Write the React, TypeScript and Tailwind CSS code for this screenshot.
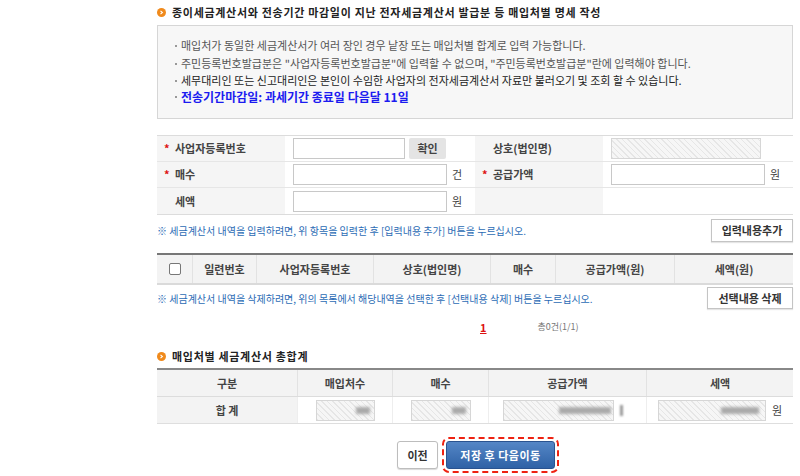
import React from "react";

const font = "font-['Noto_Sans_CJK_KR','Noto_Sans',sans-serif]";
const hatch =
  "bg-[repeating-linear-gradient(45deg,#e6e6e6_0px,#e6e6e6_1px,#f6f6f6_1px,#f6f6f6_4px)]";

function SectionTitle({ children }: { children: React.ReactNode }) {
  return (
    <div className="flex items-center gap-[6px] h-[14px]">
      <span className="flex h-[9px] w-[9px] items-center justify-center rounded-full bg-[#f08a1c]">
        <svg width="5" height="5" viewBox="0 0 5 5">
          <path d="M1.5 0.8 L3.4 2.5 L1.5 4.2" stroke="#fff" strokeWidth="1.1" fill="none" />
        </svg>
      </span>
      <span className="text-[11px] font-bold text-[#222] leading-none tracking-[0.7px]">{children}</span>
    </div>
  );
}

function Bullet({ children, className = "" }: { children: React.ReactNode; className?: string }) {
  return (
    <div className={`flex items-center gap-[4px] ${className}`}>
      <span className="h-[2px] w-[2px] bg-[#999]" />
      {children}
    </div>
  );
}

function Label({ req, children }: { req?: boolean; children: React.ReactNode }) {
  return (
    <div className="flex items-center bg-[#f5f5f5] pl-[7px] text-[11px] font-bold text-[#444]">
      <span className={`w-[11px] text-[#d11] ${req ? "" : "invisible"}`}>*</span>
      {children}
    </div>
  );
}

function Blurred({ w }: { w: number }) {
  return <span className="h-[7px] bg-[#aaa] blur-[1.5px]" style={{ width: w }} />;
}

export default function App() {
  return (
    <div className={`${font} w-[800px] h-[476px] bg-white text-[#333] overflow-hidden`}>
      <div className="ml-[157px] w-[636px] pt-[5px]">
        <SectionTitle>종이세금계산서와 전송기간 마감일이 지난 전자세금계산서 발급분 등 매입처별 명세 작성</SectionTitle>

        <div className="mt-[6px] h-[94px] border border-[#d6d6d6] bg-[#f7f7f7] pl-[17px] pt-[14px] text-[11px] leading-none">
          <Bullet className="text-[#555]">매입처가 동일한 세금계산서가 여러 장인 경우 낱장 또는 매입처별 합계로 입력 가능합니다.</Bullet>
          <Bullet className="mt-[7px] text-[#555]">주민등록번호발급분은 "사업자등록번호발급분"에 입력할 수 없으며, "주민등록번호발급분"란에 입력해야 합니다.</Bullet>
          <Bullet className="mt-[6px] text-[#222]">세무대리인 또는 신고대리인은 본인이 수임한 사업자의 전자세금계산서 자료만 불러오기 및 조회 할 수 있습니다.</Bullet>
          <Bullet className="mt-[5px] text-[12px] font-bold text-[#1b1bf0]">전송기간마감일: 과세기간 종료일 다음달 11일</Bullet>
        </div>

        <div className="mt-[16px] grid grid-cols-[128px_190px_128px_190px] grid-rows-[26px_26px_26px] border-t border-b border-[#dcdcdc] [&>*]:border-b [&>*]:border-[#e6e6e6] [&>*:nth-last-child(-n+4)]:border-b-0">
          <Label req>사업자등록번호</Label>
          <div className="flex items-center gap-[4px] pl-[8px]">
            <div className="h-[21px] w-[112px] border border-[#c8c8c8] bg-white" />
            <div className="flex h-[21px] w-[37px] items-center justify-center rounded-[2px] bg-[#e4e4e4] text-[11px] font-bold text-[#444]">확인</div>
          </div>
          <Label>상호(법인명)</Label>
          <div className="flex items-center pl-[8px]">
            <div className={`h-[21px] w-[150px] border border-[#d6d6d6] ${hatch}`} />
          </div>

          <Label req>매수</Label>
          <div className="flex items-center gap-[5px] pl-[8px] text-[11px] text-[#444]">
            <div className="h-[21px] w-[154px] border border-[#c8c8c8] bg-white" />건
          </div>
          <Label req>공급가액</Label>
          <div className="flex items-center gap-[5px] pl-[8px] text-[11px] text-[#444]">
            <div className="h-[21px] w-[154px] border border-[#c8c8c8] bg-white" />원
          </div>

          <Label>세액</Label>
          <div className="flex items-center gap-[5px] pl-[8px] text-[11px] text-[#444]">
            <div className="h-[21px] w-[154px] border border-[#c8c8c8] bg-white" />원
          </div>
          <div className="bg-[#f5f5f5]" />
          <div />
        </div>

        <div className="mt-[4px] flex h-[23px] items-center justify-between">
          <span className="text-[10px] text-[#2c6cb5]">※ 세금계산서 내역을 입력하려면, 위 항목을 입력한 후 [입력내용 추가] 버튼을 누르십시오.</span>
          <div className="flex h-[23px] w-[82px] items-center justify-center border border-[#c4c4c4] bg-white text-[11px] font-bold text-[#333] shadow-[0_1px_1px_rgba(0,0,0,0.1)]">입력내용추가</div>
        </div>

        <div className="mt-[11px] grid grid-cols-[35px_64px_117px_117px_65px_119px_119px] h-[32px] border-t-2 border-[#777] border-b-2 border-b-[#dadada] bg-[#f3f3f3] text-[11px] font-bold text-[#444]">
          <div className="flex items-center justify-center">
            <span className="h-[12px] w-[12px] rounded-[2px] border border-[#777] bg-white" />
          </div>
          {["일련번호", "사업자등록번호", "상호(법인명)", "매수", "공급가액(원)", "세액(원)"].map((h) => (
            <div key={h} className="flex items-center justify-center border-l border-[#e2e2e2]">{h}</div>
          ))}
        </div>

        <div className="mt-[2px] flex h-[22px] items-center justify-between">
          <span className="text-[10px] text-[#2c6cb5]">※ 세금계산서 내역을 삭제하려면, 위의 목록에서 해당내역을 선택한 후 [선택내용 삭제] 버튼을 누르십시오.</span>
          <div className="flex h-[22px] w-[86px] items-center justify-center border border-[#c4c4c4] bg-white text-[11px] font-bold text-[#333] shadow-[0_1px_1px_rgba(0,0,0,0.1)]">선택내용 삭제</div>
        </div>

        <div className="mt-[11px] flex h-[14px] items-center">
          <span className="ml-[323px] text-[11px] font-bold text-[#d11] underline">1</span>
          <span className="ml-[51px] text-[9px] text-[#777]">총0건(1/1)</span>
        </div>

        <div className="mt-[15px]">
          <SectionTitle>매입처별 세금계산서 총합계</SectionTitle>
        </div>

        <div className="mt-[5px] border-b border-[#dedede]">
          <div className="grid grid-cols-[140px_95px_96px_158px_147px] h-[29px] border-t-2 border-[#888] bg-[#f3f3f3] border-b border-b-[#dcdcdc] text-[11px] font-bold text-[#444]">
            {["구분", "매입처수", "매수", "공급가액", "세액"].map((h, i) => (
              <div key={h} className={`flex items-center justify-center ${i ? "border-l border-[#e2e2e2]" : ""}`}>{h}</div>
            ))}
          </div>
          <div className="grid grid-cols-[140px_95px_96px_158px_147px] h-[26px] text-[11px]">
            <div className="flex items-center justify-center bg-[#f3f3f3] font-bold text-[#444]">합 계</div>
            <div className="flex items-center border-l border-[#eee] pl-[18px]">
              <div className={`flex h-[21px] w-[59px] items-center justify-end pr-[4px] border border-[#d6d6d6] ${hatch}`}>
                <Blurred w={14} />
              </div>
            </div>
            <div className="flex items-center border-l border-[#eee] pl-[18px]">
              <div className={`flex h-[21px] w-[60px] items-center justify-end pr-[4px] border border-[#d6d6d6] ${hatch}`}>
                <Blurred w={14} />
              </div>
            </div>
            <div className="flex items-center gap-[6px] border-l border-[#eee] pl-[14px]">
              <div className={`flex h-[21px] w-[111px] items-center justify-end pr-[2px] border border-[#d6d6d6] ${hatch}`}>
                <Blurred w={52} />
              </div>
              <span className="h-[11px] w-[3px] bg-[#999] blur-[1px]" />
            </div>
            <div className="flex items-center gap-[6px] border-l border-[#eee] pl-[11px] text-[#444]">
              <div className={`flex h-[21px] w-[108px] items-center justify-end pr-[6px] border border-[#d6d6d6] ${hatch}`}>
                <Blurred w={38} />
              </div>
              원
            </div>
          </div>
        </div>

        <div className="mt-[17px] flex justify-center gap-[8px] pl-[2px]">
          <div className="flex h-[28px] w-[41px] items-center justify-center rounded-[3px] border border-[#bdbdbd] bg-white text-[11px] font-bold text-[#333] shadow-[0_1px_1px_rgba(0,0,0,0.15)]">이전</div>
          <div className="flex h-[28px] w-[109px] items-center justify-center rounded-[3px] border border-[#2a5390] bg-[linear-gradient(#5486c6,#2f62a6)] text-[11px] font-bold tracking-[0.5px] text-white outline-2 outline-dashed outline-[#e21] outline-offset-[2px]">저장 후 다음이동</div>
        </div>
      </div>
    </div>
  );
}
